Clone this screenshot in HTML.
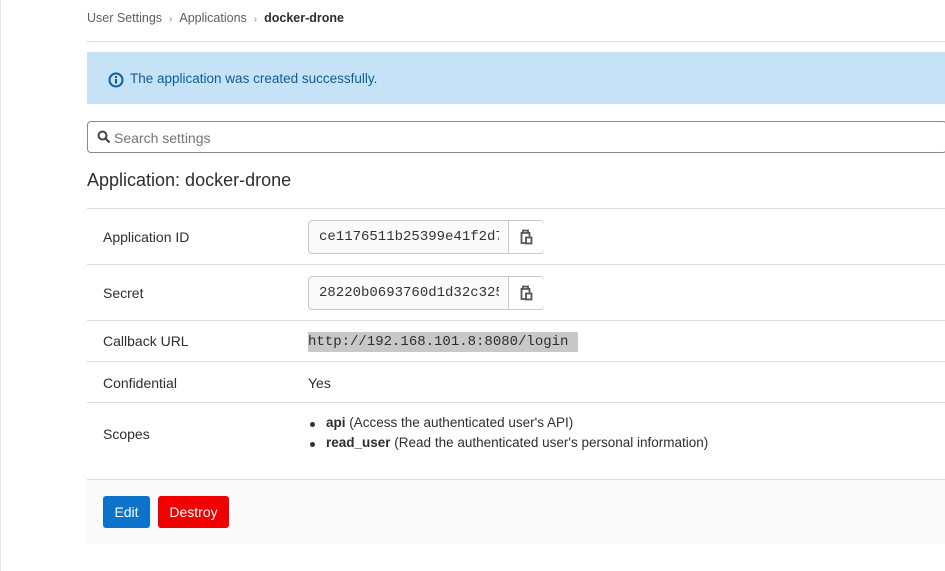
<!DOCTYPE html><html><head><style>
body{margin:0;width:945px;height:571px;overflow:hidden;background:#fff;font-family:"Liberation Sans",sans-serif;font-size:14px;color:#2e2e2e;position:relative}
.lb{position:absolute;left:0;top:0;width:1px;height:571px;background:#e5e5e5}
.bc{position:absolute;left:87px;top:11px;font-size:12.5px;color:#5e5e5e}
.bc b{color:#2e2e2e}
.bc i{font-style:normal;margin:0 7px;font-size:10px;color:#888}
.hr{position:absolute;left:87px;right:0;top:41px;border-top:1px solid #dcdcdc}
.al{position:absolute;left:87px;right:0;top:52px;height:52px;background:#c5e2f6;color:#0b5c98;font-size:13.5px}
.al span{position:absolute;left:43px;top:19px}
.al svg{position:absolute;left:21px;top:20px}
.sr{position:absolute;left:87px;right:-2px;top:121px;height:30px;border:1px solid #89888d;border-radius:4px}
.sr span{position:absolute;left:26px;top:8px;color:#737278}
.sr svg{position:absolute;left:9px;top:8px}
h2{position:absolute;left:87px;top:170px;margin:0;font-size:18px;font-weight:normal;color:#2e2e2e}
.row{position:absolute;left:87px;right:0;border-top:1px solid #dcdcdc}
.row .l{position:absolute;left:16px}
.row .v{position:absolute;left:221px}
.in{position:absolute;left:221px;width:234px;height:32px;border:1px solid #c8c8c8;border-radius:4px;background:#fafafa}
.in span{position:absolute;left:10px;top:8px;font-family:"Liberation Mono",monospace;font-size:14px;color:#333;width:180px;overflow:hidden;white-space:nowrap}
.in .bt{position:absolute;left:199px;top:0;width:35px;height:32px;border-left:1px solid #c8c8c8;background:#fff;border-radius:0 4px 4px 0}
.foot{position:absolute;left:87px;right:0;top:479px;height:64px;background:#fafafa;border-top:1px solid #dcdcdc}
.btn{position:absolute;top:16px;height:32px;border-radius:3px;color:#fff;font-size:14px;line-height:32px;text-align:center}
ul{margin:0;padding:0;list-style:none}
li{position:relative;padding-left:18px;height:20px}
li:before{content:"";position:absolute;left:2px;top:7px;width:5px;height:5px;border-radius:50%;background:#333}
</style></head><body>
<div class="lb"></div>
<div class="bc">User Settings<i>›</i>Applications<i>›</i><b>docker-drone</b></div>
<div class="hr"></div>
<div class="al"><svg width="16" height="16" viewBox="0 0 16 16"><circle cx="8" cy="8" r="6.5" fill="none" stroke="#0b5c98" stroke-width="2"/><rect x="7" y="7" width="2" height="4.5" fill="#0b5c98"/><rect x="7" y="4" width="2" height="2" fill="#0b5c98"/></svg><span>The application was created successfully.</span></div>
<div class="sr"><svg width="14" height="14" viewBox="0 0 14 14"><circle cx="5.5" cy="5.5" r="4" fill="none" stroke="#444" stroke-width="2"/><path d="M8.5 8.5l4 4" stroke="#444" stroke-width="2.2"/></svg><span>Search settings</span></div>
<h2>Application: docker-drone</h2>
<div class="row" style="top:208px;height:56px"><span class="l" style="top:20px">Application ID</span><div class="in" style="top:11px"><span>ce1176511b25399e41f2d7</span><div class="bt"><svg style="position:absolute;left:10px;top:8px" width="14" height="16" viewBox="0 0 14 16"><path d="M4 1.5h5v2.5H4zM2.5 3v11h4M10.5 3v4.5" fill="none" stroke="#555" stroke-width="1.8"/><rect x="7" y="8.5" width="5.5" height="6" fill="none" stroke="#555" stroke-width="1.8"/></svg></div></div></div>
<div class="row" style="top:264px;height:56px"><span class="l" style="top:20px">Secret</span><div class="in" style="top:11px"><span>28220b0693760d1d32c325</span><div class="bt"><svg style="position:absolute;left:10px;top:8px" width="14" height="16" viewBox="0 0 14 16"><path d="M4 1.5h5v2.5H4zM2.5 3v11h4M10.5 3v4.5" fill="none" stroke="#555" stroke-width="1.8"/><rect x="7" y="8.5" width="5.5" height="6" fill="none" stroke="#555" stroke-width="1.8"/></svg></div></div></div>
<div class="row" style="top:320px;height:41px"><span class="l" style="top:12px">Callback URL</span><span class="v" style="top:11px;background:#c8c8c8;font-family:'Liberation Mono',monospace;padding:2px 10px 2px 0">http://192.168.101.8:8080/login</span></div>
<div class="row" style="top:361px;height:41px"><span class="l" style="top:13px">Confidential</span><span class="v" style="top:13px">Yes</span></div>
<div class="row" style="top:402px;height:77px"><span class="l" style="top:23px">Scopes</span><ul class="v" style="top:12px;left:221px;font-size:13.5px"><li><b>api</b> (Access the authenticated user's API)</li><li><b>read_user</b> (Read the authenticated user's personal information)</li></ul></div>
<div class="foot"><div class="btn" style="left:16px;width:47px;background:#0d72c9">Edit</div><div class="btn" style="left:71px;width:71px;background:#f00000">Destroy</div></div>
</body></html>
